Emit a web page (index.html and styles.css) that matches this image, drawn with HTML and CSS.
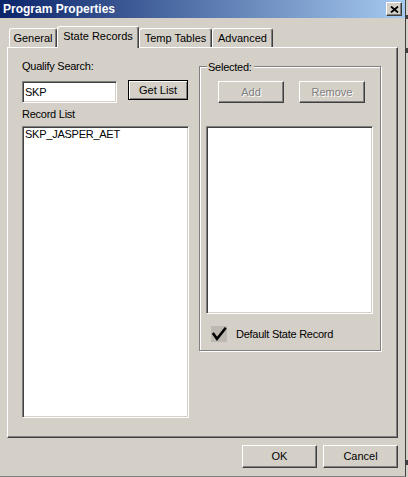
FILE: index.html
```html
<!DOCTYPE html>
<html lang="en">
<head>
<meta charset="utf-8">
<title>Program Properties</title>
<link rel="stylesheet" href="styles.css">
</head>
<body>
<div class="screen">
  <div class="window">
    <div class="titlebar">
      <span class="title">Program Properties</span>
      <button class="close" aria-label="Close">
        <svg width="9" height="7" viewBox="0 0 9 7"><path d="M1 0.5 L8 6.5 M8 0.5 L1 6.5" stroke="#000" stroke-width="1.8" fill="none"/></svg>
      </button>
    </div>
    <div class="client">
      <div class="tabs">
        <div class="tab tab-general">General</div>
        <div class="tab tab-state selected">State Records</div>
        <div class="tab tab-temp">Temp Tables</div>
        <div class="tab tab-adv">Advanced</div>
      </div>
      <div class="panel">
        <div class="col-left">
          <div class="field-label">Qualify Search:</div>
          <div class="search-row">
            <div class="textbox">SKP</div>
            <button class="btn btn-default get-list">Get List</button>
          </div>
          <div class="field-label record-label">Record List</div>
          <div class="listbox record-list">SKP_JASPER_AET</div>
        </div>
        <div class="group">
          <span class="group-title">Selected:</span>
          <div class="group-buttons">
            <button class="btn btn-disabled">Add</button>
            <button class="btn btn-disabled">Remove</button>
          </div>
          <div class="listbox selected-list"></div>
          <div class="check-row">
            <span class="check-box">
              <svg width="16" height="16" viewBox="0 0 16 16"><polyline points="1.8,7 6,12.8 14.8,1.8" fill="none" stroke="#000" stroke-width="2.6"/></svg>
            </span>
            <span class="check-label">Default State Record</span>
          </div>
        </div>
      </div>
      <div class="actions">
        <button class="btn btn-action">OK</button>
        <button class="btn btn-action">Cancel</button>
      </div>
    </div>
  </div>
  <div class="edge"></div>
</div>
</body>
</html>
```
FILE: styles.css
```css
* { box-sizing: border-box; }

body {
  margin: 0;
  background: #d4d0c8;
  font: 11px/13px "Liberation Sans", Arial, sans-serif;
  color: #000;
}

.screen {
  display: flex;
  width: 408px;
  height: 477px;
  overflow: hidden;
}

.window {
  width: 406px;
  height: 477px;
  flex: none;
  display: flex;
  flex-direction: column;
  background: #d4d0c8;
  border-right: 1px solid #404040;
  border-bottom: 1px solid #808080;
}

.edge {
  width: 2px;
  flex: none;
  background: linear-gradient(to bottom,
    #d4d0c8 0, #d4d0c8 15px, #404040 15px, #404040 19px,
    #d4d0c8 19px, #d4d0c8 48px, #404040 48px, #404040 53px,
    #d4d0c8 53px, #d4d0c8 460px, #404040 460px, #404040 465px,
    #d4d0c8 465px);
}

.titlebar {
  height: 18px;
  flex: none;
  display: flex;
  align-items: flex-start;
  padding-left: 3px;
  background: linear-gradient(to right, #0a246a, #a6caf0);
}

.title {
  color: #fff;
  font-weight: bold;
  font-size: 12px;
  line-height: 18px;
}

.close {
  margin: 2px 3px 0 auto;
  width: 16px;
  height: 14px;
  padding: 0;
  display: flex;
  align-items: center;
  justify-content: center;
  background: #d4d0c8;
  border: 1px solid;
  border-color: #fff #404040 #404040 #fff;
  box-shadow: inset -1px -1px #808080;
}

.close svg { display: block; }

.client {
  padding: 8px 7px 0 7px;
}

.tabs {
  display: flex;
  align-items: flex-end;
  height: 21px;
  padding-left: 2px;
}

.tab {
  height: 19px;
  padding-top: 3px;
  text-align: center;
  white-space: nowrap;
  border-top: 1px solid #fff;
  border-left: 1px solid #fff;
  border-right: 1px solid #404040;
  border-radius: 3px 3px 0 0;
  box-shadow: inset -1px 0 #808080;
  background: #d4d0c8;
}

.tab.selected {
  height: 22px;
  margin-bottom: -1px;
  position: relative;
  z-index: 1;
}

.tab-general { width: 48px; }
.tab-state { width: 82px; }
.tab-temp { width: 73px; }
.tab-adv { width: 61px; }

.panel {
  width: 391px;
  height: 391px;
  border: 1px solid;
  border-color: #fff #404040 #404040 #fff;
  box-shadow: inset -1px -1px #808080;
  padding: 12px 0 0 14px;
  display: grid;
  grid-template-columns: 167px 182px;
  column-gap: 10px;
  align-items: start;
  letter-spacing: -0.25px;
}

.field-label { line-height: 13px; }

.search-row {
  display: flex;
  align-items: flex-start;
  margin-top: 7px;
}

.textbox,
.listbox {
  background: #fff;
  border: 1px solid;
  border-color: #808080 #fff #fff #808080;
  box-shadow: inset 1px 1px #404040, inset -1px -1px #d4d0c8;
}

.textbox {
  width: 95px;
  height: 22px;
  margin-top: 1px;
  padding: 0 2px;
  line-height: 20px;
}

.btn {
  font: inherit;
  line-height: 13px;
  color: #000;
  padding: 0;
  text-align: center;
  background: #d4d0c8;
  border: 1px solid;
  border-color: #fff #404040 #404040 #fff;
  box-shadow: inset -1px -1px #808080;
}

.btn-default {
  border: 1px solid #000;
  box-shadow: inset 1px 1px #fff, inset -1px -1px #808080;
}

.get-list {
  width: 60px;
  height: 20px;
  margin-left: 11px;
}

.record-label { margin-top: 5px; }

.listbox { padding: 1px 2px; }

.record-list {
  width: 167px;
  height: 292px;
  margin-top: 5px;
}

.group {
  position: relative;
  margin-top: 6px;
  border: 1px solid #808080;
  box-shadow: inset 1px 1px #fff, 1px 1px #fff;
  padding: 14px 7px 8px 6px;
}

.group-title {
  position: absolute;
  top: -6px;
  left: 7px;
  padding: 0 2px 0 1px;
  line-height: 13px;
  background: #d4d0c8;
}

.group-buttons {
  display: flex;
  gap: 15px;
  margin-left: 12px;
}

.btn-disabled {
  width: 66px;
  height: 22px;
  color: #808080;
  text-shadow: 1px 1px #fff;
}

.selected-list {
  width: 167px;
  height: 188px;
  margin-top: 23px;
}

.check-row {
  display: flex;
  align-items: center;
  height: 16px;
  margin-top: 12px;
  margin-left: 5px;
}

.check-box {
  width: 16px;
  height: 16px;
  flex: none;
  background: #bdb9b2;
}

.check-box svg { display: block; }

.check-label { margin-left: 9px; }

.actions {
  display: flex;
  justify-content: flex-end;
  gap: 6px;
  margin-top: 7px;
}

.btn-action {
  width: 75px;
  height: 23px;
}
```
